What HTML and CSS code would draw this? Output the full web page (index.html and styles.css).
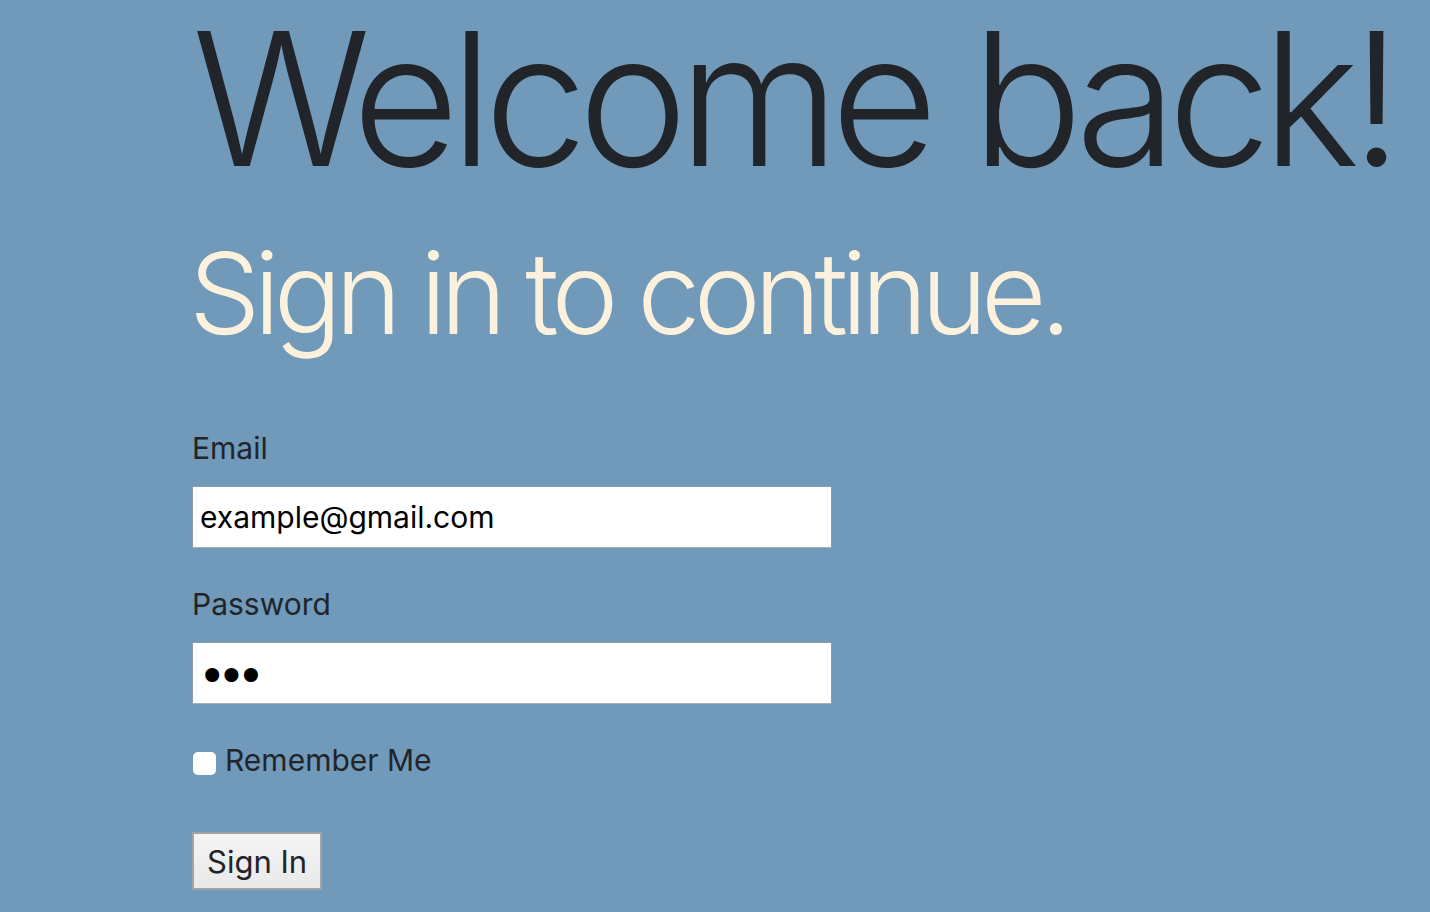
FILE: index.html
```html
<!DOCTYPE html>
<html lang="en">
<head>
<meta charset="utf-8">
<title>Sign in</title>
<link rel="stylesheet" href="styles.css">
</head>
<body>
<main class="page">
  <h1 class="welcome">Welcome back!</h1>
  <h2 class="subtitle">Sign in to continue.</h2>
  <form class="form">
    <div class="field">
      <label class="label" for="email">Email</label>
      <input class="input" id="email" type="email" value="example@gmail.com">
    </div>
    <div class="field">
      <label class="label" for="password">Password</label>
      <input class="input input-password" id="password" type="password" value="abc">
    </div>
    <div class="check-row">
      <input class="checkbox" id="remember" type="checkbox">
      <label class="check-label" for="remember">Remember Me</label>
    </div>
    <button class="button" type="button">Sign In</button>
  </form>
</main>
</body>
</html>
```

FILE: styles.css
```css
html, body {
  margin: 0;
  padding: 0;
}
body {
  background: #7099ba;
  color: #212529;
  font-family: Inter, "Liberation Sans", sans-serif;
  min-height: 912px;
}
.page {
  padding-left: 192px;
  padding-top: 7px;
  display: flex;
  flex-direction: column;
  align-items: flex-start;
}
.welcome {
  margin: 0;
  font-size: 185px;
  font-weight: 300;
  line-height: 1;
  letter-spacing: -0.05em;
  color: #212529;
  white-space: nowrap;
}
.subtitle {
  margin: 45px 0 0 -3px;
  font-size: 113px;
  font-weight: 300;
  line-height: 1;
  letter-spacing: -0.058em;
  color: #fcf1dc;
  white-space: nowrap;
}
.form {
  margin-top: 76px;
  display: flex;
  flex-direction: column;
  align-items: flex-start;
}
.field {
  display: flex;
  flex-direction: column;
  align-items: flex-start;
  margin-bottom: 34px;
}
.label {
  font-size: 30px;
  line-height: 45px;
  margin-bottom: 15px;
}
.input {
  box-sizing: border-box;
  width: 640px;
  height: 62px;
  margin: 0;
  padding: 0 7px;
  border: 1px solid #8d9aa6;
  border-bottom-color: #a8adb2;
  background: #fff;
  font-family: Inter, "Liberation Sans", sans-serif;
  font-size: 30px;
  color: #000;
  outline: none;
}
.input-password {
  font-family: "DejaVu Sans", sans-serif;
  font-size: 48px;
  letter-spacing: -9px;
  padding: 6px 4px 0 5px;
}
.check-row {
  display: flex;
  align-items: center;
  gap: 9px;
  margin-bottom: 49px;
}
.checkbox {
  appearance: none;
  -webkit-appearance: none;
  width: 23px;
  height: 23px;
  margin: 6px 0 0 1px;
  background: #fff;
  border-radius: 5px;
  border: none;
}
.check-label {
  font-size: 30px;
  line-height: 45px;
}
.button {
  box-sizing: border-box;
  height: 58px;
  padding: 0 13px;
  border: 2px solid #a3a3a3;
  background: linear-gradient(#f4f4f4, #e9e9e9);
  font-family: Inter, "Liberation Sans", sans-serif;
  font-size: 31px;
  color: #212529;
  border-radius: 0;
}
```
